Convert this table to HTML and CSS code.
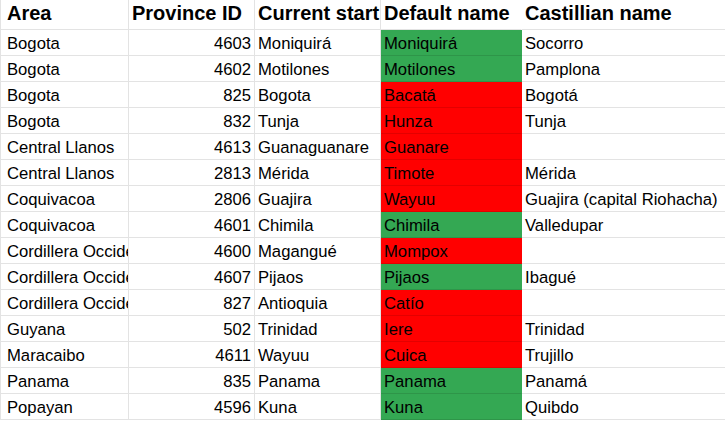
FILE: index.html
```html
<!DOCTYPE html>
<html lang="es">
<head>
<meta charset="utf-8">
<title>Provinces</title>
<link rel="stylesheet" href="styles.css">
</head>
<body>
<div class="sheet">
  <div class="c h first">Area</div><div class="c h">Province ID</div><div class="c h">Current start</div><div class="c h d">Default name</div><div class="c h last">Castillian name</div>

  <div class="c first">Bogota</div><div class="c num">4603</div><div class="c">Moniquirá</div><div class="c d g">Moniquirá</div><div class="c last">Socorro</div>
  <div class="c first">Bogota</div><div class="c num">4602</div><div class="c">Motilones</div><div class="c d g">Motilones</div><div class="c last">Pamplona</div>
  <div class="c first">Bogota</div><div class="c num">825</div><div class="c">Bogota</div><div class="c d r">Bacatá</div><div class="c last">Bogotá</div>
  <div class="c first">Bogota</div><div class="c num">832</div><div class="c">Tunja</div><div class="c d r">Hunza</div><div class="c last">Tunja</div>
  <div class="c first">Central Llanos</div><div class="c num">4613</div><div class="c">Guanaguanare</div><div class="c d r">Guanare</div><div class="c last"></div>
  <div class="c first">Central Llanos</div><div class="c num">2813</div><div class="c">Mérida</div><div class="c d r">Timote</div><div class="c last">Mérida</div>
  <div class="c first">Coquivacoa</div><div class="c num">2806</div><div class="c">Guajira</div><div class="c d r">Wayuu</div><div class="c last">Guajira (capital Riohacha)</div>
  <div class="c first">Coquivacoa</div><div class="c num">4601</div><div class="c">Chimila</div><div class="c d g">Chimila</div><div class="c last">Valledupar</div>
  <div class="c first">Cordillera Occidental</div><div class="c num">4600</div><div class="c">Magangué</div><div class="c d r">Mompox</div><div class="c last"></div>
  <div class="c first">Cordillera Occidental</div><div class="c num">4607</div><div class="c">Pijaos</div><div class="c d g">Pijaos</div><div class="c last">Ibagué</div>
  <div class="c first">Cordillera Occidental</div><div class="c num">827</div><div class="c">Antioquia</div><div class="c d r">Catío</div><div class="c last"></div>
  <div class="c first">Guyana</div><div class="c num">502</div><div class="c">Trinidad</div><div class="c d r">Iere</div><div class="c last">Trinidad</div>
  <div class="c first">Maracaibo</div><div class="c num">4611</div><div class="c">Wayuu</div><div class="c d r">Cuica</div><div class="c last">Trujillo</div>
  <div class="c first">Panama</div><div class="c num">835</div><div class="c">Panama</div><div class="c d g">Panama</div><div class="c last">Panamá</div>
  <div class="c first">Popayan</div><div class="c num">4596</div><div class="c">Kuna</div><div class="c d g">Kuna</div><div class="c last">Quibdo</div>
</div>
</body>
</html>
```

FILE: styles.css
```css
html, body {
  margin: 0;
  padding: 0;
  background: #ffffff;
  overflow: hidden;
}

.sheet {
  display: grid;
  grid-template-columns: 129px 126px 126px 141px 1fr;
  grid-template-rows: 30px repeat(15, 26px);
  width: 725px;
  font-family: "Liberation Sans", Arial, sans-serif;
  font-size: 16.67px;
  color: #000;
}

.c {
  box-sizing: border-box;
  display: flex;
  align-items: flex-end;
  padding: 0 0 2px 3px;
  line-height: 19px;
  white-space: nowrap;
  overflow: hidden;
  border-right: 1px solid rgba(0, 0, 0, 0.11);
  border-bottom: 1px solid rgba(0, 0, 0, 0.11);
}

.first {
  border-left: 1px solid rgba(0, 0, 0, 0.11);
  padding-left: 6px;
}

.last {
  border-right: none;
}

.h {
  font-weight: bold;
  font-size: 20px;
  line-height: 23px;
  padding-bottom: 4px;
}

.num {
  justify-content: flex-end;
  padding-right: 3px;
}

.d {
  border-right-color: transparent;
}

.g {
  background: #34a853;
}

.r {
  background: #ff0000;
}
```
